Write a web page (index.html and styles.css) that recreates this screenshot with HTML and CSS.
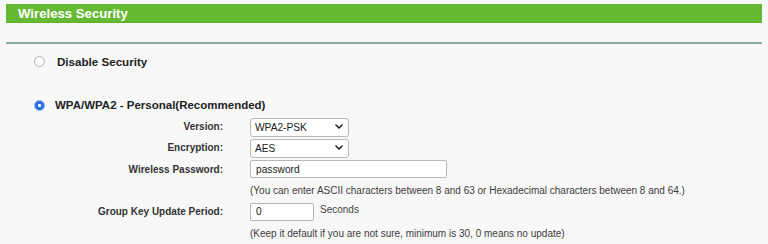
FILE: index.html
```html
<!DOCTYPE html>
<html lang="en">
<head>
  <meta charset="UTF-8" />
  <title>Wireless Security</title>
  <link rel="stylesheet" href="styles.css">
</head>
<body>
  <div class="panel">
    <div class="title">Wireless Security</div>
    <div class="rule"></div>

    <!-- security modes -->
    <label class="option option-off">
      <input type="radio" name="sec" />
      <span>Disable Security</span>
    </label>
    <label class="option option-on">
      <input type="radio" name="sec" checked />
      <span>WPA/WPA2 - Personal(Recommended)</span>
    </label>

    <div class="form">
      <div class="label">Version:</div>
      <div class="field">
        <span class="select-wrap">
          <select><option>WPA2-PSK</option><option>WPA-PSK</option></select>
          <svg class="chev" width="8" height="5" viewBox="0 0 8 5"><path d="M1 1 L4 4 L7 1" fill="none" stroke="#222" stroke-width="1.6" stroke-linecap="round" stroke-linejoin="round"/></svg>
        </span>
      </div>

      <div class="label">Encryption:</div>
      <div class="field">
        <span class="select-wrap">
          <select><option>AES</option><option>TKIP</option></select>
          <svg class="chev" width="8" height="5" viewBox="0 0 8 5"><path d="M1 1 L4 4 L7 1" fill="none" stroke="#222" stroke-width="1.6" stroke-linecap="round" stroke-linejoin="round"/></svg>
        </span>
      </div>

      <div class="label">Wireless Password:</div>
      <div class="field"><input type="text" class="pass" value="password" /></div>

      <div class="label"></div>
      <div class="field hint">(You can enter ASCII characters between 8 and 63 or Hexadecimal characters between 8 and 64.)</div>

      <div class="label">Group Key Update Period:</div>
      <div class="field">
        <input type="text" class="period" value="0" />
        <span class="unit">Seconds</span>
      </div>

      <div class="label"></div>
      <div class="field hint">(Keep it default if you are not sure, minimum is 30, 0 means no update)</div>
    </div>
  </div>
</body>
</html>
```

FILE: styles.css
```css
* {
  box-sizing: border-box;
}

body {
  margin: 0;
  background: #f8f8f8;
  font-family: 'Liberation Sans', Arial, sans-serif;
  color: #222;
}

.panel {
  padding: 4px 6px 0;
}

.title {
  height: 19px;
  line-height: 19px;
  padding-left: 12px;
  background: #66b933;
  border-bottom: 1px solid #5cb02a;
  color: #fff;
  font-size: 13.2px;
  font-weight: bold;
}

.rule {
  margin-top: 19px;
  height: 2px;
  background: #8ba89a;
}

/* radios */
.option {
  display: flex;
  align-items: center;
  gap: 12px;
  height: 20px;
  padding-left: 28px;
  font-weight: bold;
  font-size: 11.6px;
}

.option-off {
  margin-top: 7px;
}

.option-on {
  margin-top: 24px;
  margin-bottom: 1px;
  gap: 10px;
  font-size: 11.5px;
}

.option input {
  appearance: none;
  margin: 0;
  width: 11px;
  height: 11px;
  border-radius: 50%;
  border: 1px solid #b3b3b3;
  background: #fff;
}

.option input:checked {
  border-color: #86aef2;
  background: radial-gradient(circle, #fff 0 1.2px, #2b6fe6 2px);
}

/* form grid */
.form {
  display: grid;
  grid-template-columns: 217px 1fr;
  column-gap: 27px;
  grid-auto-rows: 21.3px;
  align-items: center;
}

.label {
  text-align: right;
  font-size: 10px;
  font-weight: bold;
  color: #333;
}

.field {
  display: flex;
  align-items: center;
}

.select-wrap {
  position: relative;
  display: inline-block;
}

select {
  appearance: none;
  width: 99px;
  height: 19px;
  padding: 0 0 0 4px;
  border: 1px solid #b8b8b8;
  border-radius: 3px;
  background: #fff;
  font-family: inherit;
  font-size: 10.2px;
  color: #222;
}

.chev {
  position: absolute;
  right: 6px;
  top: 7px;
  pointer-events: none;
}

input[type="text"] {
  height: 18px;
  padding: 0 0 0 5px;
  border: 1px solid #b8b8b8;
  border-radius: 2px;
  background: #fff;
  font-family: inherit;
  font-size: 10.2px;
  color: #222;
}

.pass {
  width: 197px;
}

.period {
  width: 64px;
}

.unit {
  margin-left: 6px;
  margin-top: -4px;
  font-size: 10px;
  color: #444;
}

.hint {
  font-size: 10px;
  color: #3c3c3c;
}
```
